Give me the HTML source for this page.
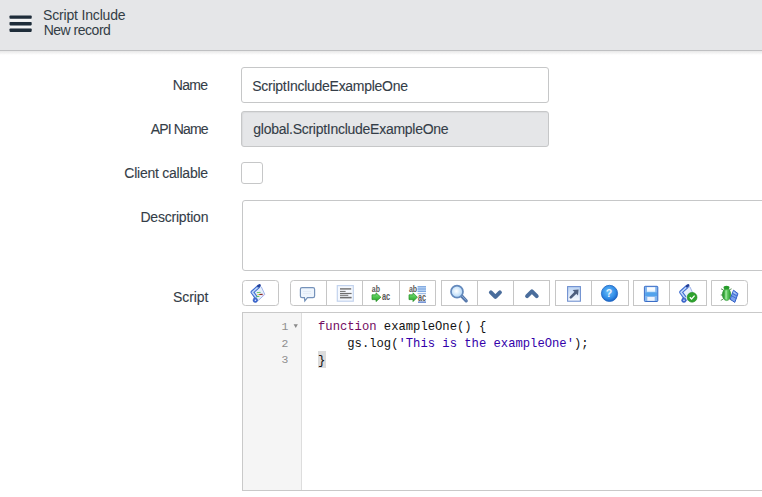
<!DOCTYPE html>
<html><head><meta charset="utf-8">
<style>
html,body{margin:0;padding:0;width:762px;height:497px;overflow:hidden;background:#fff;}
body{position:relative;font-family:"Liberation Sans",sans-serif;color:#333;}
.abs{position:absolute;}
#hdr{left:0;top:0;width:762px;height:50px;background:#e5e6e8;border-bottom:1px solid #bfc0c2;}
#shadow{left:0;top:51px;width:762px;height:4px;background:linear-gradient(#e8e8e8,#fff);}
.bar{position:absolute;left:10px;width:22px;height:4px;border-radius:2px;background:#293e4f;}
.t1{color:#333d45;white-space:nowrap;}
.t2{color:#333d45;white-space:nowrap;}
.lbl{color:#343d47;white-space:nowrap;-webkit-text-stroke:0.1px #343d47;}
.inp{box-sizing:border-box;border:1px solid #c6c7c8;border-radius:3px;background:#fff;}
.val{color:#343d47;white-space:nowrap;-webkit-text-stroke:0.1px #343d47;}
.tb{position:absolute;top:280px;height:26px;box-sizing:border-box;border:1px solid #c6c6c6;border-radius:3px;background:#fff;}
.dv{position:absolute;top:0;bottom:0;width:1px;background:#c6c6c6;}
.code{font-family:"Liberation Mono",monospace;font-size:12.2px;white-space:pre;color:#111;}
.ln{font-family:"Liberation Mono",monospace;font-size:12px;color:#8e8e8e;}
</style></head><body>
<div id="hdr" class="abs">
  <svg class="abs" style="left:0;top:0" width="40" height="40"><rect x="10" y="19" width="21.5" height="2.6" fill="#f2f3f4"/><rect x="10" y="25.5" width="21.5" height="2.6" fill="#f2f3f4"/><g fill="#1f2d3a"><rect x="9.5" y="15.4" width="22.2" height="3.4" rx="0.8"/><rect x="9.5" y="22" width="22.2" height="3.4" rx="0.8"/><rect x="9.5" y="28.5" width="22.2" height="3.4" rx="0.8"/></g></svg>
  <div class="abs t1" style="left:43.1px;top:7px;font-size:14px;letter-spacing:-0.18px">Script Include</div>
  <div class="abs t2" style="left:43.7px;top:22px;font-size:14px;letter-spacing:-0.49px">New record</div>
</div>
<div id="shadow" class="abs"></div>

<div class="abs lbl" style="left:172.8px;top:77px;font-size:14px;letter-spacing:-0.70px">Name</div>
<div class="abs inp" style="left:241px;top:67px;width:308px;height:36px"></div>
<div class="abs val" style="left:252.3px;top:78px;font-size:14px;letter-spacing:-0.28px">ScriptIncludeExampleOne</div>

<div class="abs lbl" style="left:150.8px;top:121px;font-size:14px;letter-spacing:-0.87px">API Name</div>
<div class="abs inp" style="left:241px;top:111px;width:308px;height:36px;background:#e5e6e8;box-shadow:inset 1px 1px 1px rgba(0,0,0,0.05)"></div>
<div class="abs val" style="left:253.3px;top:121px;font-size:14px;letter-spacing:-0.27px">global.ScriptIncludeExampleOne</div>

<div class="abs lbl" style="left:124.3px;top:165px;font-size:14px;letter-spacing:-0.24px">Client callable</div>
<div class="abs inp" style="left:241px;top:162px;width:22px;height:22px"></div>

<div class="abs lbl" style="left:140.4px;top:209px;font-size:14px;letter-spacing:-0.2px">Description</div>
<div class="abs inp" style="left:242px;top:200px;width:540px;height:71px"></div>

<div class="abs lbl" style="left:173.0px;top:289px;font-size:14px;letter-spacing:-0.08px">Script</div>

<svg class="abs" style="left:0;top:0" width="762" height="497" viewBox="0 0 762 497">
<defs>
<radialGradient id="hg" cx="0.45" cy="0.4" r="0.6"><stop offset="0" stop-color="#6cc2fb"/><stop offset="0.7" stop-color="#2f8ae6"/><stop offset="1" stop-color="#1a62c4"/></radialGradient>
<linearGradient id="eg" x1="0" y1="0" x2="0" y2="1"><stop offset="0" stop-color="#bcd4f4"/><stop offset="1" stop-color="#fafcff"/></linearGradient>
<radialGradient id="mg" cx="0.45" cy="0.45" r="0.6"><stop offset="0" stop-color="#ffffff"/><stop offset="0.3" stop-color="#e4f2fd"/><stop offset="1" stop-color="#a6d0f6"/></radialGradient>
<linearGradient id="bg" x1="0" y1="0" x2="1" y2="0"><stop offset="0" stop-color="#1c8a22"/><stop offset="0.5" stop-color="#6fd86f"/><stop offset="1" stop-color="#24962a"/></linearGradient>
<linearGradient id="ag" x1="0" y1="0" x2="0" y2="1"><stop offset="0" stop-color="#7ce87c"/><stop offset="1" stop-color="#22a022"/></linearGradient>
<linearGradient id="fl" x1="0" y1="0" x2="0" y2="1"><stop offset="0" stop-color="#ffffff"/><stop offset="0.6" stop-color="#f4f9ff"/><stop offset="1" stop-color="#b8dcfa"/></linearGradient>
</defs>
<g fill="#fff" stroke="#c6c6c6" stroke-width="1">
<rect x="242.5" y="280.5" width="36" height="25" rx="3"/>
<path d="M293.5 280.5 H435.5 V305.5 H293.5 Q290.5 305.5 290.5 302.5 V283.5 Q290.5 280.5 293.5 280.5 Z"/>
<rect x="441.5" y="280.5" width="108" height="25"/>
<rect x="555.5" y="280.5" width="73" height="25"/>
<rect x="633.5" y="280.5" width="73" height="25"/>
<path d="M711.5 280.5 H744.5 Q747.5 280.5 747.5 283.5 V302.5 Q747.5 305.5 744.5 305.5 H711.5 Z"/>
<path d="M326.5 281V305M362.5 281V305M399.5 281V305M477.5 281V305M513.5 281V305M591.5 281V305M669.5 281V305"/>
</g>
<!-- 1 scroll -->
<g>
<path d="M258.8 285.4 L261.4 287 L264.8 294.4 L258.6 300.2 L255.3 300.4 L251.8 292 Z" fill="#e6effc" stroke="#98aee8" stroke-width="0.9"/>
<path d="M259 286.2 L252.3 292.2 L256.4 297.6" fill="none" stroke="#3f6ed2" stroke-width="3.6" stroke-linejoin="round"/>
<path d="M259 286.2 L252.3 292.2 L256.4 297.6" fill="none" stroke="#c4daf8" stroke-width="1.5" stroke-linejoin="round"/>
<ellipse cx="259" cy="285.8" rx="2.1" ry="1.4" transform="rotate(-40 259 285.8)" fill="#223f98"/>
<circle cx="255.3" cy="300.2" r="2.3" fill="#3d6ad4" stroke="#2a50b0" stroke-width="0.5"/>
<circle cx="255.4" cy="300.3" r="0.8" fill="#e4ecff"/>
<path d="M256.8 292.6 L260.6 292.4" stroke="#5cc45c" stroke-width="0.9"/>
<path d="M259.2 294.5 L262.6 294.4" stroke="#8a2a20" stroke-width="1.1"/>
<path d="M257.4 294.6 L259.2 294.5" stroke="#e8d040" stroke-width="1"/>
<path d="M256.4 296.6 L259.4 296.4" stroke="#52c052" stroke-width="0.9"/>
<path d="M262.4 295.6 L264 295.2" stroke="#d0a8e8" stroke-width="0.9"/>
</g>
<!-- 2 comment -->
<path d="M302 287.6 H313 Q314.6 287.6 314.6 289.2 V296 Q314.6 297.6 313 297.6 H307.4 L304.8 301 L304.4 297.6 H302 Q300.4 297.6 300.4 296 V289.2 Q300.4 287.6 302 287.6 Z" fill="#eef5fd" stroke="#7592ba" stroke-width="1.2"/>
<path d="M303 291.5 H311 M303 293.5 H311" stroke="#e0e8f4" stroke-width="0.8"/>
<!-- 3 format -->
<rect x="337.3" y="285.6" width="16" height="15.6" fill="#f6f9fe" stroke="#c2d3ee" stroke-width="1.2"/>
<g fill="#6e6e6e">
<rect x="340" y="288.2" width="11.2" height="1.4"/>
<rect x="340" y="290.9" width="5.6" height="1"/>
<rect x="340" y="292.9" width="11.6" height="1.2"/>
<rect x="340" y="294.8" width="8.3" height="1"/>
<rect x="340" y="296.8" width="11.6" height="1.6"/>
</g>
<!-- 4 ab->ac -->
<g font-family="Liberation Sans" font-weight="bold" fill="#585858">
<text x="371.8" y="291.8" font-size="9.2" textLength="8.2" lengthAdjust="spacingAndGlyphs">ab</text>
<text x="382" y="299.8" font-size="10.6" textLength="8.2" lengthAdjust="spacingAndGlyphs">ac</text>
</g>
<path d="M372 294.8 H376 V292.8 L380.9 297.2 L376 301.6 V299.6 H372 Z" fill="url(#ag)" stroke="#1f8c1f" stroke-width="0.7"/>
<!-- 5 replace all -->
<rect x="417.6" y="286.3" width="8.4" height="5.6" fill="#b2d0f4"/>
<path d="M417.6 286.6 H426 M417.6 289 H426 M417.6 291.6 H426 M417.6 293.7 H426" stroke="#6a98d8" stroke-width="0.8"/>
<path d="M418 302.1 H426" stroke="#2f5fbf" stroke-width="1.1"/>
<g font-family="Liberation Sans" font-weight="bold" fill="#585858">
<text x="408.9" y="291.8" font-size="9.2" textLength="8.2" lengthAdjust="spacingAndGlyphs">ab</text>
<text x="418" y="300.6" font-size="10.6" textLength="8" lengthAdjust="spacingAndGlyphs">ac</text>
</g>
<path d="M409 294.8 H413 V292.8 L417.4 297.2 L413 301.6 V299.6 H409 Z" fill="url(#ag)" stroke="#1f8c1f" stroke-width="0.7"/>
<!-- 6 magnifier -->
<path d="M461.6 296 L466.2 300.8" stroke="#5577aa" stroke-width="3.3" stroke-linecap="round"/>
<path d="M462.4 296.4 L465.8 300" stroke="#8fb0dc" stroke-width="0.9" stroke-linecap="round"/>
<circle cx="457" cy="291.7" r="6" fill="url(#mg)" stroke="#6389bc" stroke-width="1.7"/>
<!-- 7/8 chevrons -->
<path d="M490.9 292.3 L495.4 296.8 L499.9 292.3" fill="none" stroke="#4a6d9c" stroke-width="4" stroke-linecap="round" stroke-linejoin="round"/>
<path d="M527.1 296.2 L531.9 291.4 L536.7 296.2" fill="none" stroke="#4a6d9c" stroke-width="4" stroke-linecap="round" stroke-linejoin="round"/>
<!-- 9 expand -->
<rect x="567.6" y="286.6" width="12.8" height="14.6" fill="url(#eg)" stroke="#6f90d0" stroke-width="1.1"/>
<path d="M570.8 297.4 L575.2 293" stroke="#4d5e7e" stroke-width="2.6" stroke-linecap="round"/>
<path d="M572.6 290 L578.6 289.4 L578 295.4 Z" fill="#4d5e7e"/>
<!-- 10 help -->
<circle cx="609.5" cy="293.4" r="8.1" fill="url(#hg)" stroke="#1f66c2" stroke-width="0.8"/>
<text x="609" y="297.2" text-anchor="middle" font-family="Liberation Sans" font-weight="bold" font-size="10.5" fill="#eaf4ff">?</text>
<!-- 11 floppy -->
<rect x="644.4" y="286.3" width="13.4" height="15.2" rx="0.8" fill="#84b6ee" stroke="#3a6cc6" stroke-width="1"/>
<rect x="647" y="287.2" width="8.2" height="5" fill="url(#fl)"/>
<rect x="645.2" y="292.4" width="11.8" height="3.6" fill="#52a2ec"/>
<rect x="647.3" y="297" width="7.4" height="3.8" fill="#eef3fc"/>
<!-- 12 scroll check -->
<g transform="translate(428.6 0)">
<path d="M258.8 285.4 L261.4 287 L264.8 294.4 L258.6 300.2 L255.3 300.4 L251.8 292 Z" fill="#e6effc" stroke="#98aee8" stroke-width="0.9"/>
<path d="M259 286.2 L252.3 292.2 L256.4 297.6" fill="none" stroke="#3f6ed2" stroke-width="3.6" stroke-linejoin="round"/>
<path d="M259 286.2 L252.3 292.2 L256.4 297.6" fill="none" stroke="#c4daf8" stroke-width="1.5" stroke-linejoin="round"/>
<ellipse cx="259" cy="285.8" rx="2.1" ry="1.4" transform="rotate(-40 259 285.8)" fill="#223f98"/>
<circle cx="255.3" cy="300.2" r="2.3" fill="#3d6ad4" stroke="#2a50b0" stroke-width="0.5"/>
<circle cx="255.4" cy="300.3" r="0.8" fill="#e4ecff"/>
</g>
<circle cx="692.1" cy="297.3" r="4.9" fill="#2ea32e" stroke="#1f861f" stroke-width="0.6"/>
<path d="M689.8 297.2 L691.6 299 L694.6 295.6" fill="none" stroke="#fff" stroke-width="1.3"/>
<!-- 13 bug scroll -->
<g stroke="#3a7a3a" stroke-width="0.8">
<path d="M721 288.8 L723.6 290 M731.6 288.8 L729 290 M720.8 295 L723 295 M720.8 300.4 L723.4 299 M731.8 300.4 L729.4 299"/>
</g>
<ellipse cx="726.6" cy="294.6" rx="4.2" ry="6" fill="url(#bg)" stroke="#22902a" stroke-width="0.6"/>
<ellipse cx="726.5" cy="287.6" rx="3" ry="1.9" fill="#279c2c"/>
<path d="M726 290.5 V299" stroke="#c8f4c8" stroke-width="0.8"/>
<path d="M733.5 290.2 L738 293.6 L734.8 302.4 L730.2 299.2 Z" fill="#7aa2ee" stroke="#3460c8" stroke-width="1"/>
<path d="M731.6 295.8 L736.6 298.6 M732.4 293.4 L737 296" stroke="#3a66cc" stroke-width="0.9"/>
<path d="M733.2 292 L735.6 293.6" stroke="#dbe8ff" stroke-width="0.8"/>
</svg>

<div class="abs" style="left:242px;top:312px;width:540px;height:179px;box-sizing:border-box;border:1px solid #c9c9c9;background:#fff"></div>
<div class="abs" style="left:243px;top:313px;width:58px;height:177px;background:#f5f5f5;border-right:1px solid #ddd"></div>
<div class="abs ln" style="left:281.5px;top:319px;line-height:16.7px;font-size:11.4px">1<br>2<br>3</div>
<svg class="abs" style="left:290px;top:320px" width="12" height="12"><path d="M3.6 4.2 H7.9 L5.75 7.9 Z" fill="#8a8a8a"/></svg>
<div class="abs" style="left:318px;top:351px;width:8px;height:17px;background:#dcdcdc"></div>
<div class="abs code" style="left:318px;top:319px;line-height:17px"><span style="color:#740c62">function</span> exampleOne() {
    gs.log(<span style="color:#30a">'This is the exampleOne'</span>);
}</div>
</body></html>
